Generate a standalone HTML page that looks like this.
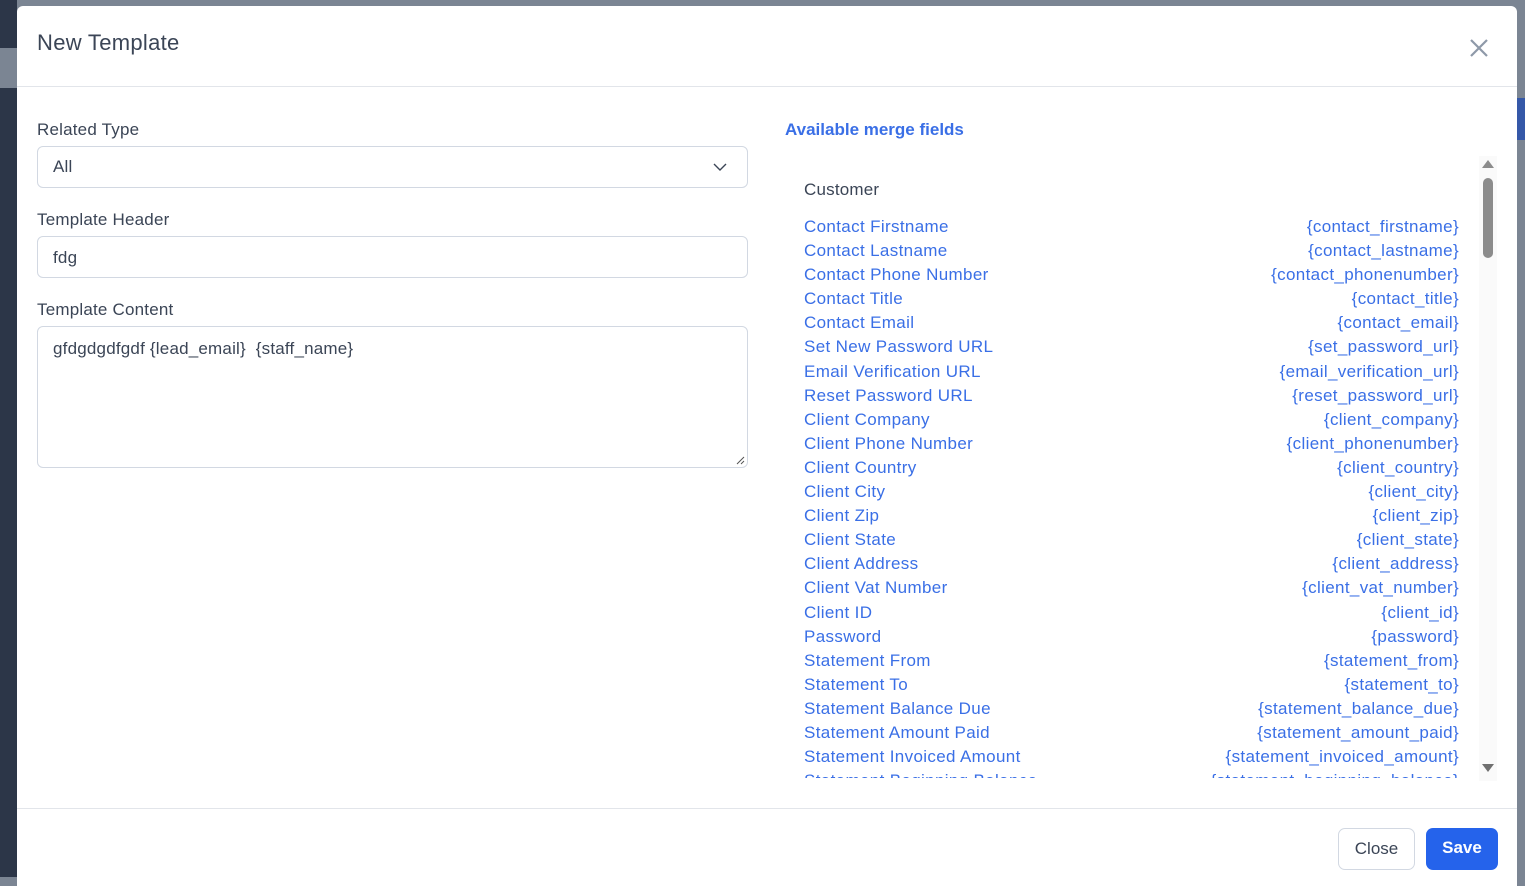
<!DOCTYPE html>
<html><head><meta charset="utf-8"><style>
*{box-sizing:border-box;margin:0;padding:0}
body{width:1525px;height:877px;overflow:hidden;background:#7b8593;font-family:"Liberation Sans",sans-serif;position:relative}
.side{position:absolute;left:0;top:0;width:17px;height:877px;background:#2c3648}
.side .hl{position:absolute;left:0;top:48px;width:17px;height:40px;background:#7b8593}
.rs{position:absolute;left:1517px;top:0;width:8px;height:877px;background:#7b8593}
.rs .b{position:absolute;top:98px;width:8px;height:42px;background:#3558a8}
.modal{position:absolute;left:17px;top:6px;width:1500px;height:880px;background:#fff;border-radius:6px 6px 0 0}
.hdr{height:81px;border-bottom:1px solid #e2e5ea;position:relative}
.title{position:absolute;left:20px;top:24px;font-size:22px;color:#3b4556;letter-spacing:0.3px}
.x{position:absolute;left:1452px;top:32px}
.lbl{position:absolute;left:20px;font-size:17px;color:#3b4556;letter-spacing:0.2px}
.inp{position:absolute;left:20px;width:711px;border:1px solid #d2d8e2;border-radius:6px;font-size:17px;color:#3b4556;padding-left:15px;letter-spacing:0.2px}
.blue{color:#3a6fe6}
.list{position:absolute;left:787px;top:209px;width:655px;height:563px;overflow:hidden}
.row{display:flex;justify-content:space-between;height:24.1px;line-height:24.1px;font-size:17px;color:#3a6fe6;white-space:nowrap;letter-spacing:0.35px}
.sb{position:absolute;left:1462px;top:150px;width:18px;height:625px;background:#fafafa}
.thumb{position:absolute;left:4px;top:22px;width:10px;height:80px;background:#8c8c8c;border-radius:5px}
.ftr{position:absolute;left:0;top:802px;width:1500px;border-top:1px solid #e2e5ea}
.btn{position:absolute;top:822px;height:42px;border-radius:7px;font-size:17px;text-align:center;line-height:40px}
</style></head><body>
<div class="side"><div class="hl"></div></div>
<div class="rs"><div class="b"></div></div>
<div class="modal">
<div class="hdr"><div class="title">New Template</div>
<svg class="x" width="20" height="20" viewBox="0 0 20 20"><path d="M2 2L18 18M18 2L2 18" stroke="#8e99a8" stroke-width="2.2"/></svg></div>
<div class="lbl" style="top:114px">Related Type</div>
<div class="inp" style="top:140px;height:42px;line-height:40px">All
<svg style="position:absolute;right:20px;top:16px" width="14" height="9" viewBox="0 0 14 9"><path d="M1 1L7 7L13 1" stroke="#3b4556" stroke-width="1.4" fill="none"/></svg></div>
<div class="lbl" style="top:204px">Template Header</div>
<div class="inp" style="top:230px;height:42px;line-height:42px">fdg</div>
<div class="lbl" style="top:294px">Template Content</div>
<div class="inp" style="top:320px;height:142px;padding-top:11px;line-height:22px">gfdgdgdfgdf {lead_email}&nbsp; {staff_name}
<svg style="position:absolute;right:2px;bottom:2px" width="9" height="9"><path d="M1 8L8 1M5 8L8 5" stroke="#555" stroke-width="1"/></svg></div>
<div class="lbl blue" style="left:768px;top:114px;font-weight:bold;font-size:17px;letter-spacing:0">Available merge fields</div>
<div class="lbl" style="left:787px;top:174px">Customer</div>
<div class="list">
<div class="row"><span>Contact Firstname</span><span>{contact_firstname}</span></div>
<div class="row"><span>Contact Lastname</span><span>{contact_lastname}</span></div>
<div class="row"><span>Contact Phone Number</span><span>{contact_phonenumber}</span></div>
<div class="row"><span>Contact Title</span><span>{contact_title}</span></div>
<div class="row"><span>Contact Email</span><span>{contact_email}</span></div>
<div class="row"><span>Set New Password URL</span><span>{set_password_url}</span></div>
<div class="row"><span>Email Verification URL</span><span>{email_verification_url}</span></div>
<div class="row"><span>Reset Password URL</span><span>{reset_password_url}</span></div>
<div class="row"><span>Client Company</span><span>{client_company}</span></div>
<div class="row"><span>Client Phone Number</span><span>{client_phonenumber}</span></div>
<div class="row"><span>Client Country</span><span>{client_country}</span></div>
<div class="row"><span>Client City</span><span>{client_city}</span></div>
<div class="row"><span>Client Zip</span><span>{client_zip}</span></div>
<div class="row"><span>Client State</span><span>{client_state}</span></div>
<div class="row"><span>Client Address</span><span>{client_address}</span></div>
<div class="row"><span>Client Vat Number</span><span>{client_vat_number}</span></div>
<div class="row"><span>Client ID</span><span>{client_id}</span></div>
<div class="row"><span>Password</span><span>{password}</span></div>
<div class="row"><span>Statement From</span><span>{statement_from}</span></div>
<div class="row"><span>Statement To</span><span>{statement_to}</span></div>
<div class="row"><span>Statement Balance Due</span><span>{statement_balance_due}</span></div>
<div class="row"><span>Statement Amount Paid</span><span>{statement_amount_paid}</span></div>
<div class="row"><span>Statement Invoiced Amount</span><span>{statement_invoiced_amount}</span></div>
<div class="row"><span>Statement Beginning Balance</span><span>{statement_beginning_balance}</span></div>
</div>
<div class="sb"><svg style="position:absolute;left:3px;top:3px" width="12" height="9"><path d="M0 9L6 1L12 9Z" fill="#8c8c8c"/></svg><div class="thumb"></div>
<svg style="position:absolute;left:3px;top:608px" width="12" height="9"><path d="M0 0L6 8L12 0Z" fill="#707070"/></svg></div>
<div class="ftr"></div>
<div class="btn" style="left:1321px;width:77px;border:1px solid #d2d8e2;color:#3b4556">Close</div>
<div class="btn" style="left:1409px;width:72px;background:#2563eb;color:#fff;font-weight:bold">Save</div>
</div>
</body></html>
